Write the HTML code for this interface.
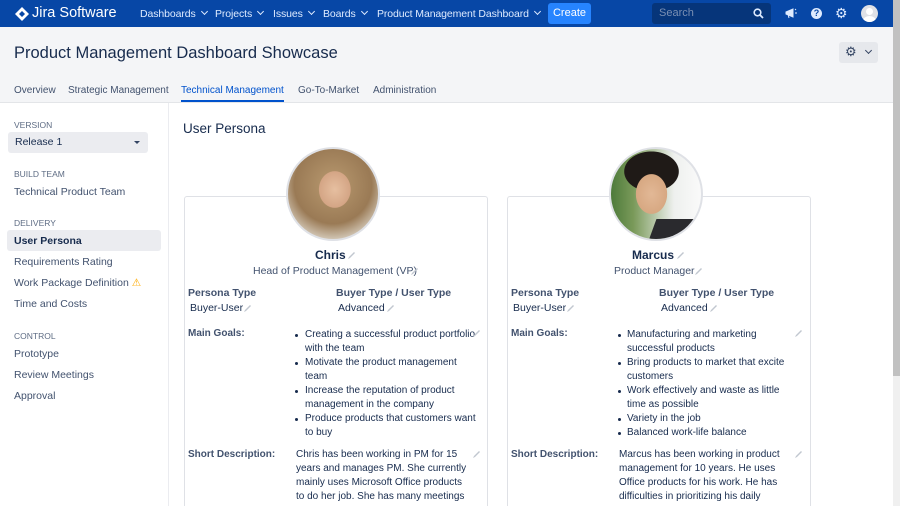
<!DOCTYPE html>
<html><head><meta charset="utf-8"><style>
*{margin:0;padding:0;box-sizing:border-box}
html,body{width:900px;height:506px;overflow:hidden}
body{position:relative;background:#fff;font-family:"Liberation Sans",sans-serif;color:#172b4d}
.a{position:absolute;white-space:nowrap;line-height:14px}
.nav{position:absolute;left:0;top:0;width:893px;height:27px;background:#0747a6}
.nv{color:#deebff;font-size:10.5px;top:7px;letter-spacing:-0.1px}
.ch{display:inline-block;width:5px;height:5px;border-right:1.6px solid #deebff;border-bottom:1.6px solid #deebff;transform:rotate(45deg);margin-left:6px;position:relative;top:-3px}
.hdr{position:absolute;left:0;top:27px;width:893px;height:76px;background:#f4f5f7;border-bottom:1px solid #e3e5e8}
.side{position:absolute;left:0;top:103px;width:169px;height:403px;background:#fff;border-right:1px solid #ebecf0}
.sh{font-size:8.5px;color:#5e6c84}
.si{font-size:10.5px;color:#42526e}
.tab{font-size:10px;color:#42526e;top:84px}
.card{position:absolute;top:196px;width:304px;height:310px;border:1px solid #dfe1e6;border-bottom:none;border-radius:3px 3px 0 0;background:#fff}
.t{font-size:10px;color:#172b4d}
.b{font-size:10px;font-weight:bold;color:#42526e}
.av{position:absolute;width:94px;height:94px;border-radius:50%;border:2px solid #dfe1e6;overflow:hidden}
.dot{position:absolute;width:3px;height:3px;border-radius:50%;background:#172b4d}
.pen{position:absolute;width:9px;height:9px}
</style></head><body>
<div class="nav"></div>
<svg class="a" style="left:15px;top:7px" width="14" height="14" viewBox="0 0 14 14"><path d="M7 0L14 7L7 14L0 7Z" fill="#fff"/><path d="M7 4L10 7L7 10L4 7Z" fill="#0747a6"/></svg>
<div class="a" style="left:32px;top:5px;font-size:14.5px;color:#fff;line-height:17px">Jira Software</div>
<div class="a nv" style="left:140px">Dashboards<span class="ch"></span></div>
<div class="a nv" style="left:215px">Projects<span class="ch"></span></div>
<div class="a nv" style="left:273px">Issues<span class="ch"></span></div>
<div class="a nv" style="left:323px">Boards<span class="ch"></span></div>
<div class="a nv" style="left:377px">Product Management Dashboard<span class="ch"></span></div>
<div class="a" style="left:548px;top:3px;width:43px;height:21px;background:#2684ff;border-radius:3px;color:#fff;font-size:11px;line-height:21px;text-align:center">Create</div>
<div class="a" style="left:652px;top:3px;width:119px;height:21px;background:#06357a;border-radius:3px;color:#7a8fb3;font-size:11px;line-height:21px;padding-left:7px">Search</div>
<svg class="a" style="left:753px;top:8px" width="11" height="11"><circle cx="4.5" cy="4.5" r="3.3" stroke="#deebff" stroke-width="1.6" fill="none"/><path d="M7 7L10 10" stroke="#deebff" stroke-width="1.8"/></svg>
<svg class="a" style="left:785px;top:7px" width="12" height="12"><path d="M1 5L8 2V10L1 7Z M3 7L4 11" fill="#deebff" stroke="#deebff"/><path d="M10 3L11 2M10 6H12" stroke="#deebff"/></svg>
<div class="a" style="left:811px;top:8px;width:11px;height:11px;border-radius:50%;background:#deebff;color:#0747a6;font-size:9px;font-weight:bold;line-height:11px;text-align:center">?</div>
<div class="a" style="left:835px;top:5px;color:#deebff;font-size:14px;line-height:16px">⚙</div>
<div class="a" style="left:861px;top:5px;width:17px;height:17px;border-radius:50%;background:#dfe1e6;overflow:hidden"><div style="position:absolute;left:5px;top:3px;width:7px;height:7px;border-radius:50%;background:#fff"></div><div style="position:absolute;left:2px;top:11px;width:13px;height:10px;border-radius:50%;background:#fff"></div></div>
<div class="hdr"></div>
<div class="a" style="left:14px;top:43px;font-size:16.5px;line-height:20px;color:#172b4d">Product Management Dashboard Showcase</div>
<div class="a" style="left:839px;top:42px;width:39px;height:21px;background:#e6e8ec;border-radius:3px"></div>
<div class="a" style="left:845px;top:44px;font-size:13px;line-height:16px;color:#344563">⚙</div>
<div class="a" style="left:866px;top:48px;width:5px;height:5px;border-right:1.5px solid #344563;border-bottom:1.5px solid #344563;transform:rotate(45deg)"></div>
<div class="a tab" style="left:14px">Overview</div>
<div class="a tab" style="left:68px">Strategic Management</div>
<div class="a tab" style="left:181px;color:#0052cc">Technical Management</div>
<div class="a" style="left:181px;top:100px;width:103px;height:2px;background:#0052cc"></div>
<div class="a tab" style="left:298px">Go-To-Market</div>
<div class="a tab" style="left:373px">Administration</div>
<div class="side"></div>
<div class="a sh" style="left:14px;top:118px">VERSION</div>
<div class="a" style="left:8px;top:132px;width:140px;height:21px;background:#ebecf0;border-radius:3px;font-size:10.5px;line-height:21px;padding-left:7px;color:#172b4d">Release 1</div>
<div class="a" style="left:134px;top:141px;width:0;height:0;border-left:3px solid transparent;border-right:3px solid transparent;border-top:3px solid #344563"></div>
<div class="a sh" style="left:14px;top:167px">BUILD TEAM</div>
<div class="a si" style="left:14px;top:185px">Technical Product Team</div>
<div class="a sh" style="left:14px;top:216px">DELIVERY</div>
<div class="a" style="left:7px;top:230px;width:154px;height:21px;background:#ebecf0;border-radius:3px"></div>
<div class="a si" style="left:14px;top:234px;font-weight:bold;color:#172b4d">User Persona</div>
<div class="a si" style="left:14px;top:255px">Requirements Rating</div>
<div class="a si" style="left:14px;top:276px">Work Package Definition <span style="color:#ffab00">⚠</span></div>
<div class="a si" style="left:14px;top:297px">Time and Costs</div>
<div class="a sh" style="left:14px;top:329px">CONTROL</div>
<div class="a si" style="left:14px;top:347px">Prototype</div>
<div class="a si" style="left:14px;top:368px">Review Meetings</div>
<div class="a si" style="left:14px;top:389px">Approval</div>
<div class="a" style="left:183px;top:120px;font-size:13.5px;line-height:18px">User Persona</div>

<div class="card" style="left:184px"></div>
<div class="card" style="left:507px"></div>
<div class="av" style="left:286px;top:147px;background:radial-gradient(ellipse 26px 30px at 52% 45%,#e6bfa0 0,#d4a585 60%,transparent 62%),radial-gradient(circle at 50% 40%,#b99a70 0,#9a7a55 55%,#d8cfc0 80%)"></div>
<div class="av" style="left:609px;top:147px;background:radial-gradient(ellipse 22px 28px at 45% 50%,#e2b896 0,#d7a882 70%,transparent 72%),radial-gradient(ellipse 30px 22px at 45% 25%,#1f1a17 0,#1f1a17 90%,transparent 92%),linear-gradient(90deg,#4d7a3a 0,#7a9a5a 25%,#eef0ee 70%,#fafafa 100%)"><div style="position:absolute;left:40px;top:70px;width:54px;height:30px;background:#2a2a2e;transform:skewX(-20deg)"></div></div>

<div class="a" style="left:315px;top:248px;font-size:12px;font-weight:bold">Chris</div>
<div class="a t" style="left:253px;top:264px;color:#42526e;font-size:10.5px">Head of Product Management (VP)</div>
<div class="a b" style="left:188px;top:286px;font-size:10.5px">Persona Type</div>
<div class="a b" style="left:336px;top:286px;font-size:10.5px">Buyer Type / User Type</div>
<div class="a t" style="left:190px;top:301px;font-size:10.5px">Buyer-User</div>
<div class="a t" style="left:338px;top:301px;font-size:10.5px">Advanced</div>
<div class="a b" style="left:188px;top:327px">Main Goals:</div>
<div class="a t" style="left:305px;top:328px;line-height:14px">Creating a successful product portfolio<br>with the team<br>Motivate the product management<br>team<br>Increase the reputation of product<br>management in the company<br>Produce products that customers want<br>to buy</div>
<div class="dot" style="left:295px;top:334px"></div><div class="dot" style="left:295px;top:362px"></div><div class="dot" style="left:295px;top:390px"></div><div class="dot" style="left:295px;top:418px"></div>
<div class="a b" style="left:188px;top:448px">Short Description:</div>
<div class="a t" style="left:296px;top:448px">Chris has been working in PM for 15<br>years and manages PM. She currently<br>mainly uses Microsoft Office products<br>to do her job. She has many meetings</div>

<div class="a" style="left:632px;top:248px;font-size:12px;font-weight:bold">Marcus</div>
<div class="a t" style="left:614px;top:264px;color:#42526e;font-size:10.5px">Product Manager</div>
<div class="a b" style="left:511px;top:286px;font-size:10.5px">Persona Type</div>
<div class="a b" style="left:659px;top:286px;font-size:10.5px">Buyer Type / User Type</div>
<div class="a t" style="left:513px;top:301px;font-size:10.5px">Buyer-User</div>
<div class="a t" style="left:661px;top:301px;font-size:10.5px">Advanced</div>
<div class="a b" style="left:511px;top:327px">Main Goals:</div>
<div class="a t" style="left:627px;top:328px">Manufacturing and marketing<br>successful products<br>Bring products to market that excite<br>customers<br>Work effectively and waste as little<br>time as possible<br>Variety in the job<br>Balanced work-life balance</div>
<div class="dot" style="left:618px;top:334px"></div><div class="dot" style="left:618px;top:362px"></div><div class="dot" style="left:618px;top:390px"></div><div class="dot" style="left:618px;top:418px"></div><div class="dot" style="left:618px;top:432px"></div>
<div class="a b" style="left:511px;top:448px">Short Description:</div>
<div class="a t" style="left:619px;top:448px">Marcus has been working in product<br>management for 10 years. He uses<br>Office products for his work. He has<br>difficulties in prioritizing his daily</div>

<svg width="0" height="0" style="position:absolute"><defs><g id="p"><path d="M1 8L2 6L7 1L8 2L3 7Z" fill="#c1c7d0"/></g></defs></svg>
<svg class="pen" style="left:347px;top:251px"><use href="#p"/></svg>
<svg class="pen" style="left:410px;top:267px"><use href="#p"/></svg>
<svg class="pen" style="left:243px;top:304px"><use href="#p"/></svg>
<svg class="pen" style="left:386px;top:304px"><use href="#p"/></svg>
<svg class="pen" style="left:472px;top:329px"><use href="#p"/></svg>
<svg class="pen" style="left:472px;top:450px"><use href="#p"/></svg>
<svg class="pen" style="left:676px;top:251px"><use href="#p"/></svg>
<svg class="pen" style="left:694px;top:267px"><use href="#p"/></svg>
<svg class="pen" style="left:566px;top:304px"><use href="#p"/></svg>
<svg class="pen" style="left:709px;top:304px"><use href="#p"/></svg>
<svg class="pen" style="left:794px;top:329px"><use href="#p"/></svg>
<svg class="pen" style="left:794px;top:450px"><use href="#p"/></svg>

<div class="a" style="left:893px;top:0;width:7px;height:506px;background:#f0f0f0"></div>
<div class="a" style="left:893px;top:0;width:7px;height:376px;background:#c1c1c1"></div>
</body></html>
